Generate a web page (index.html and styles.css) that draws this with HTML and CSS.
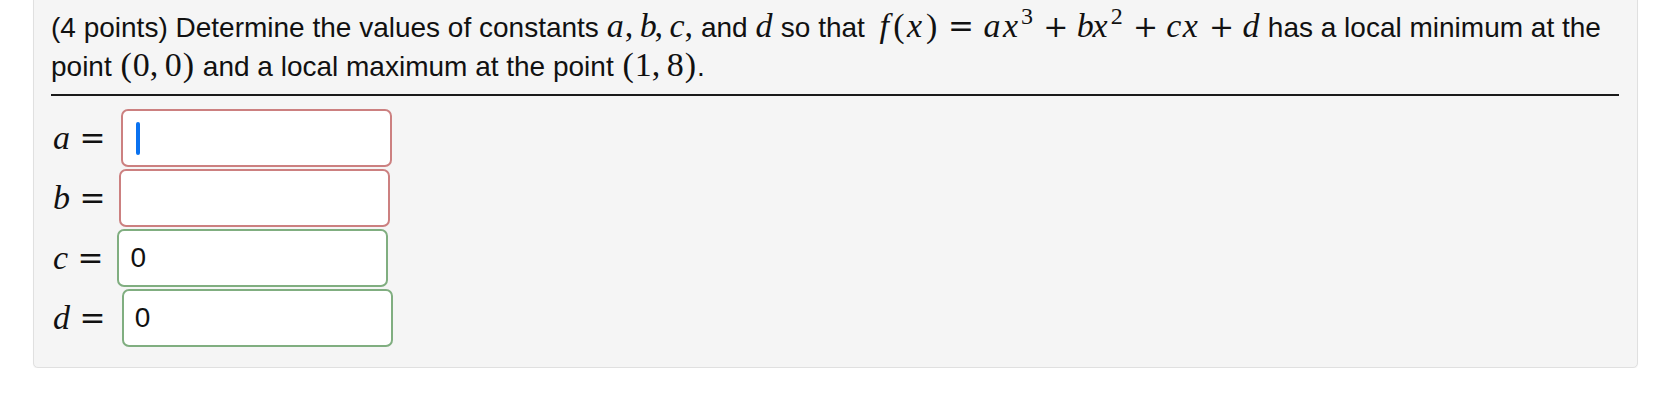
FILE: index.html
```html
<!DOCTYPE html>
<html>
<head>
<meta charset="utf-8">
<link rel="stylesheet" href="styles.css">
</head>
<body>
<div class="page">
  <div class="problem">
    <p class="question">(4 points) Determine the values of constants <span class="m"><i class="va">a</i><span class="pn">,</span><i class="vb">b</i><span class="pn">,</span><i class="vc">c</i>,</span> and <span class="m"><i class="vd">d</i></span> so that <span class="m"><i class="vf">f</i><span class="pr">(</span><i class="vx">x</i><span class="pr">)</span><span class="rel">=</span><i class="va">a</i><i class="vx">x</i><sup>3</sup><span class="bin">+</span><i class="vb">b</i><i class="vx">x</i><sup>2</sup><span class="bin">+</span><i class="vc">c</i><i class="vx">x</i><span class="bin">+</span><i class="vd">d</i></span> has a local minimum at the<br>point <span class="m"><span class="pr">(</span>0<span class="pn">,</span>0<span class="pr">)</span></span> and a local maximum at the point <span class="m"><span class="pr">(</span>1<span class="pn">,</span>8<span class="pr">)</span></span>.</p>
    <hr class="rule">
    <div class="answers">
      <div class="row">
        <span class="lbl la"><i>a</i><span class="eq">=</span></span>
        <div class="field bad"><span class="caret"></span></div>
      </div>
      <div class="row">
        <span class="lbl lb"><i>b</i><span class="eq">=</span></span>
        <div class="field bad"></div>
      </div>
      <div class="row">
        <span class="lbl lc"><i>c</i><span class="eq">=</span></span>
        <div class="field good">0</div>
      </div>
      <div class="row">
        <span class="lbl ld"><i>d</i><span class="eq">=</span></span>
        <div class="field good">0</div>
      </div>
    </div>
  </div>
</div>
</body>
</html>
```
FILE: styles.css
```css
html, body {
  margin: 0;
  padding: 0;
  background: #ffffff;
}
.page {
  padding: 0 32px 0 33px;
  width: 1605px;
}
.problem {
  margin-top: -14px;
  background: #f5f5f5;
  border: 1px solid #e0e0e0;
  border-radius: 5px;
  box-shadow: 0 1px 1px rgba(0,0,0,0.05);
  padding: 21px 18px 20px 17px;
  height: 382px;
  box-sizing: border-box;
  font-family: "Liberation Sans", Arial, sans-serif;
  color: #111;
}
.question {
  margin: 0;
  font-size: 28px;
  line-height: 39px;
}
.m {
  font-family: "Liberation Serif", "Times New Roman", serif;
  font-size: 34px;
  line-height: 1;
}
.m i, .lbl i {
  font-style: italic;
}
.va { margin-right: 0.03em; }
.vb { margin-right: -0.07em; }
.vd { margin-right: 0.02em; }
.vx { margin-left: 0.04em; margin-right: 0.09em; }
.vf { margin-left: 0.2em; margin-right: 0.1em; }
.pr { padding: 0 0.028em; }
.pn { margin-right: 0.195em; }
.m sup {
  font-size: 24px;
  line-height: 0;
  vertical-align: 13px;
  margin-right: 2px;
}
.rel, .bin, .eq {
  font-family: "DejaVu Serif", serif;
  font-style: normal;
}
.rel {
  font-size: 31px;
  padding: 0 9.7px;
}
.bin {
  font-size: 30px;
  padding: 0 8.2px;
}
.rule {
  margin: 8px 0 13px 0;
  border: none;
  border-top: 2px solid #1a1a1a;
  height: 0;
}
.answers {
  display: flex;
  flex-direction: column;
  gap: 2px;
}
.row {
  display: flex;
  align-items: center;
  height: 58px;
  padding-left: 2px;
}
.lbl {
  font-family: "Liberation Serif", "Times New Roman", serif;
  font-size: 34px;
  display: flex;
  align-items: baseline;
}
.la { margin-right: 15.5px; }
.lb { margin-right: 13.5px; }
.lc { margin-right: 13.9px; }
.ld { margin-right: 16.3px; }
.eq {
  font-size: 31px;
  padding-left: 9.5px;
}
.field {
  width: 271px;
  height: 58px;
  box-sizing: border-box;
  background: #ffffff;
  border: 2px solid #cc8080;
  border-radius: 7px;
  display: flex;
  align-items: center;
  padding-left: 11px;
  font-family: "Liberation Sans", Arial, sans-serif;
  font-size: 28px;
  color: #111;
}
.field.good {
  border-color: #80ae80;
}
.caret {
  display: block;
  width: 4px;
  height: 33px;
  background: #0a72f0;
  border-radius: 2px;
  margin-left: 2px;
}
```
